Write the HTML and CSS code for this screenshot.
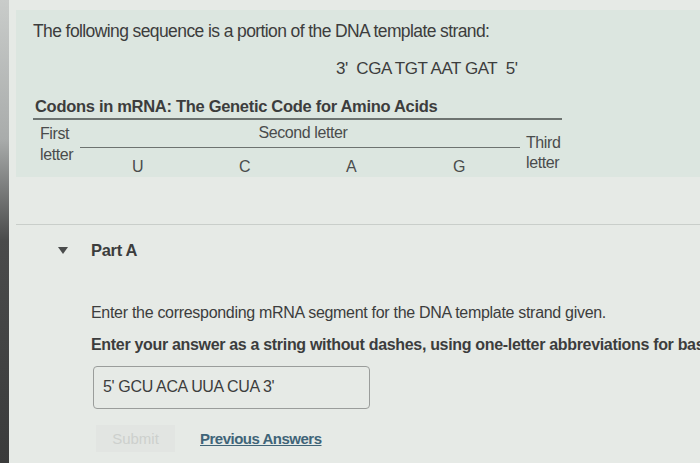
FILE: index.html
```html
<!DOCTYPE html>
<html>
<head>
<meta charset="utf-8">
<link rel="stylesheet" href="styles.css">
</head>
<body>
<div class="screen">
  <div class="bezel"></div>
  <div class="page">
    <section class="intro">
      <p class="lead">The following sequence is a portion of the DNA template strand:</p>
      <p class="seq">3'&nbsp; CGA TGT AAT GAT&nbsp; 5'</p>
      <h3 class="codon-title">Codons in mRNA: The Genetic Code for Amino Acids</h3>
      <div class="table-head">
        <div class="first">First<br>letter</div>
        <div class="second">
          <div class="second-label">Second letter</div>
          <div class="letters"><span>U</span><span>C</span><span>A</span><span>G</span></div>
        </div>
        <div class="third">Third<br>letter</div>
      </div>
    </section>
    <div class="divider"></div>
    <section class="part">
      <div class="part-head"><span class="tri"></span><span class="part-title">Part A</span></div>
      <p class="q1">Enter the corresponding mRNA segment for the DNA template strand given.</p>
      <p class="q2">Enter your answer as a string without dashes, using one-letter abbreviations for bases.</p>
      <div class="answer">5' GCU ACA UUA CUA 3'</div>
      <div class="actions">
        <span class="submit">Submit</span>
        <a class="prev">Previous Answers</a>
      </div>
    </section>
  </div>
</div>
</body>
</html>
```

FILE: styles.css
```css
html, body {
  margin: 0;
  padding: 0;
}
body {
  width: 700px;
  height: 463px;
  overflow: hidden;
  background: #e6eae6;
  font-family: "Liberation Sans", Arial, sans-serif;
  color: #3c3d3d;
}
.screen {
  display: flex;
  height: 463px;
}
.bezel {
  width: 9px;
  flex: none;
  background: linear-gradient(to bottom, #c9ccca 0%, #a9acab 30%, #4a4b4b 52%, #3a3b3b 100%);
}
.page {
  flex: 1;
  min-width: 0;
  padding-left: 7px;
  padding-top: 10px;
  white-space: nowrap;
  overflow: hidden;
}
.intro {
  background: #dce6e0;
  height: 167px;
  padding: 11px 0 0 17px;
  box-sizing: border-box;
}
.lead {
  margin: 0;
  font-size: 17.5px;
  letter-spacing: -0.6px;
  line-height: 20px;
}
.seq {
  margin: 18px 0 0 303px;
  font-size: 17px;
  letter-spacing: -0.45px;
  line-height: 20px;
}
.codon-title {
  margin: 17px 0 0 0;
  font-size: 16.5px;
  letter-spacing: -0.3px;
  font-weight: bold;
  line-height: 20px;
  width: 527px;
  border-bottom: 2px solid #6d7370;
  padding: 0 0 2px 2px;
}
.table-head {
  display: flex;
  margin-top: 3px;
  font-size: 16px;
  letter-spacing: -0.4px;
  color: #4a4c4c;
  line-height: 21px;
}
.first {
  width: 40px;
  padding-left: 7px;
}
.second {
  width: 440px;
}
.second-label {
  text-align: center;
  border-bottom: 1.5px solid #6d7370;
  padding-bottom: 4px;
  line-height: 20px;
  padding-left: 6px;
}
.letters {
  display: flex;
  padding-top: 8px;
}
.letters span {
  width: 107px;
  padding-left: 52px;
  box-sizing: border-box;
}
.third {
  padding-top: 10px;
  padding-left: 6px;
  line-height: 20px;
}
.divider {
  height: 1px;
  background: #c9ceca;
  margin-top: 47px;
}
.part {
  padding-left: 42px;
}
.part-head {
  display: flex;
  align-items: center;
  margin-top: 15px;
  height: 20px;
}
.tri {
  width: 0;
  height: 0;
  border-left: 5px solid transparent;
  border-right: 5px solid transparent;
  border-top: 7px solid #4a4c4c;
}
.part-title {
  margin-left: 23px;
  font-size: 16.5px;
  font-weight: bold;
  letter-spacing: -0.3px;
}
.q1 {
  margin: 43px 0 0 33px;
  font-size: 16px;
  letter-spacing: -0.3px;
  line-height: 20px;
}
.q2 {
  margin: 12px 0 0 33px;
  font-size: 16px;
  font-weight: bold;
  letter-spacing: -0.32px;
  line-height: 20px;
}
.answer {
  margin: 11px 0 0 35px;
  width: 277px;
  height: 43px;
  box-sizing: border-box;
  border: 1.5px solid #9a9d9b;
  border-radius: 4px;
  padding-left: 9px;
  line-height: 40px;
  font-size: 16px;
  letter-spacing: -0.35px;
}
.actions {
  display: flex;
  align-items: center;
  margin: 16px 0 0 38px;
}
.submit {
  width: 79px;
  height: 27px;
  background: #e2e5e2;
  color: #cdd0cd;
  font-size: 15px;
  line-height: 27px;
  text-align: center;
}
.prev {
  margin-left: 25px;
  color: #3f6478;
  font-weight: bold;
  font-size: 15px;
  letter-spacing: -0.5px;
  text-decoration: underline;
}
```
